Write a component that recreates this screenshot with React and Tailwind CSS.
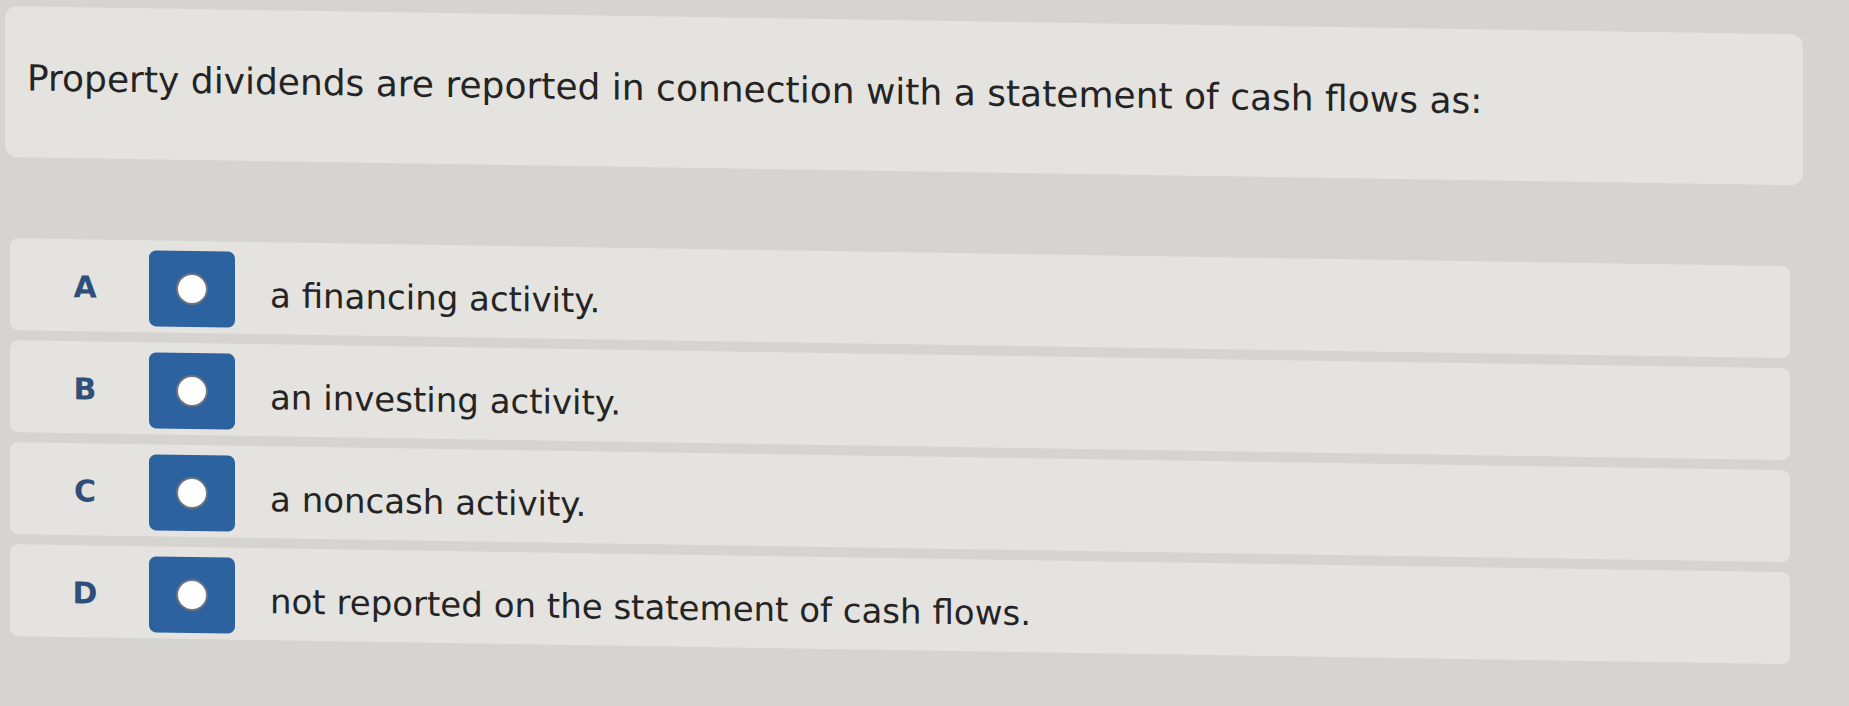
import React from "react";

const options = [
  { letter: "A", text: "a financing activity." },
  { letter: "B", text: "an investing activity." },
  { letter: "C", text: "a noncash activity." },
  { letter: "D", text: "not reported on the statement of cash flows." },
];

export default function App() {
  return (
    <div
      className="w-[1849px] h-[706px] overflow-hidden bg-[#d5d4d0]"
      style={{ fontFamily: '"DejaVu Sans", Verdana, sans-serif' }}
    >
      <div className="origin-top-left skew-y-[0.9deg] flex flex-col">
        <div className="ml-[5px] mt-[6px] w-[1798px] h-[151px] rounded-[12px] bg-[#e4e3df] pl-[22px] pt-[52px]">
          <p className="text-[36px] leading-[40px] text-[#242424]">
            Property dividends are reported in connection with a statement of cash flows as:
          </p>
        </div>

        <div className="mt-[81px] flex flex-col gap-[10px]">
          {options.map((o) => (
            <div
              key={o.letter}
              className="ml-[10px] w-[1780px] h-[92px] rounded-[8px] bg-[#e4e3df] flex items-start pt-[10px] pl-[52px]"
            >
              <div className="w-[46px] mt-[20px] text-center text-[30px] leading-[36px] font-bold text-[#2f4f7a]">
                {o.letter}
              </div>
              <div className="ml-[41px] w-[86px] h-[76px] rounded-[7px] bg-[#2d62a0] flex items-center justify-center">
                <div className="w-[32px] h-[32px] rounded-full bg-white border-2 border-[#6d7480]" />
              </div>
              <div className="ml-[35px] mt-[21px] text-[34px] leading-[44px] text-[#242424]">
                {o.text}
              </div>
            </div>
          ))}
        </div>
      </div>
    </div>
  );
}
